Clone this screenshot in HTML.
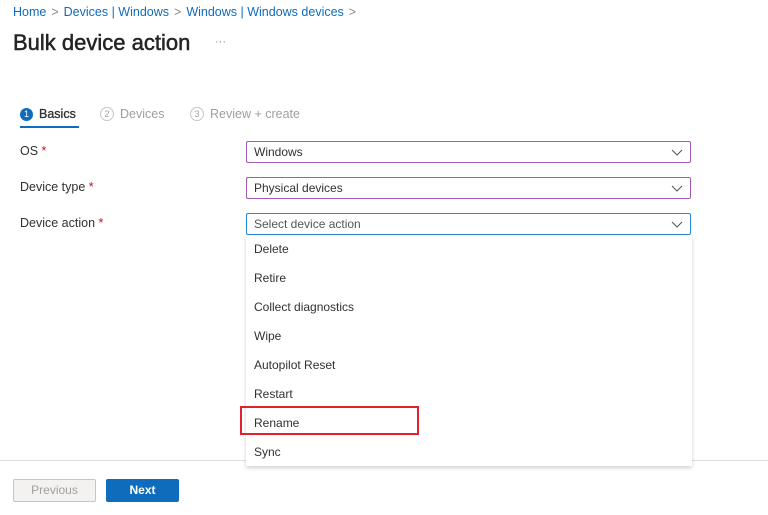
<!DOCTYPE html><html><head><style>
body{margin:0;width:768px;height:515px;background:#fff;font-family:"Liberation Sans",sans-serif;position:relative;overflow:hidden;color:#323130}
.a{position:absolute;white-space:nowrap}
.bc{font-size:12.5px;color:#0f6cbd;top:5px;left:13px}
.bc span{color:#888;margin:0 5px}
.sel{position:absolute;left:246px;width:436px;height:20px;border:1px solid #a35ab5;border-radius:2px;font-size:12px;line-height:20px;padding-left:7px;box-sizing:content-box}
.chev{position:absolute;right:7px;top:4px}
.lbl{font-size:12.5px;left:20px}
.lbl b{color:#c50f1f;font-weight:normal}
.it{position:absolute;left:254px;font-size:12px}
.circ{display:inline-block;width:13px;height:13px;border-radius:50%;font-size:9px;line-height:13px;text-align:center;vertical-align:1px;margin-right:6px}
</style></head><body>
<div class="a bc">Home<span>&gt;</span>Devices | Windows<span>&gt;</span>Windows | Windows devices<span>&gt;</span></div>
<div class="a" style="top:30px;left:13px;font-size:22px;color:#252423;-webkit-text-stroke:0.5px #252423">Bulk device action</div>
<div class="a" style="top:36px;left:215px;font-size:11px;color:#888">···</div>
<div class="a" style="top:107px;left:20px;font-size:12.5px;-webkit-text-stroke:0.3px #323130"><span class="circ" style="background:#0f6cbd;color:#fff;-webkit-text-stroke:0">1</span>Basics</div>
<div class="a" style="top:126px;left:20px;width:59px;height:2px;background:#0f6cbd"></div>
<div class="a" style="top:107px;left:100px;font-size:12.5px;color:#a19f9d"><span class="circ" style="border:1px solid #c8c6c4;width:12px;height:12px;line-height:12px">2</span>Devices</div>
<div class="a" style="top:107px;left:190px;font-size:12.5px;color:#a19f9d"><span class="circ" style="border:1px solid #c8c6c4;width:12px;height:12px;line-height:12px">3</span>Review + create</div>
<div class="a lbl" style="top:144px">OS <b>*</b></div>
<div class="a lbl" style="top:180px">Device type <b>*</b></div>
<div class="a lbl" style="top:216px">Device action <b>*</b></div>
<div class="sel" style="top:141px">Windows<svg class="chev" width="12" height="12"><path d="M1 4l5 5 5-5" fill="none" stroke="#555" stroke-width="1"/></svg></div>
<div class="sel" style="top:177px">Physical devices<svg class="chev" width="12" height="12"><path d="M1 4l5 5 5-5" fill="none" stroke="#555" stroke-width="1"/></svg></div>
<div class="sel" style="top:213px;border-color:#2b88d8;color:#555">Select device action<svg class="chev" width="12" height="12"><path d="M1 4l5 5 5-5" fill="none" stroke="#555" stroke-width="1"/></svg></div>
<div class="a" style="left:0;top:460px;width:768px;height:1px;background:#e1dfdd"></div>
<div class="a" style="left:246px;top:235px;width:446px;height:231px;background:#fff;box-shadow:0 2px 4px rgba(0,0,0,.18)"></div>
<div class="it" style="top:242px">Delete</div>
<div class="it" style="top:271px">Retire</div>
<div class="it" style="top:300px">Collect diagnostics</div>
<div class="it" style="top:329px">Wipe</div>
<div class="it" style="top:358px">Autopilot Reset</div>
<div class="it" style="top:387px">Restart</div>
<div class="it" style="top:416px">Rename</div>
<div class="it" style="top:445px">Sync</div>
<div class="a" style="left:240px;top:406px;width:175px;height:25px;border:2px solid #e3202f"></div>
<div class="a" style="left:13px;top:479px;width:81px;height:21px;border:1px solid #c8c6c4;background:#f3f2f1;border-radius:2px;color:#a19f9d;font-size:12px;text-align:center;line-height:21px">Previous</div>
<div class="a" style="left:106px;top:479px;width:73px;height:23px;background:#0f6cbd;border-radius:2px;color:#fff;font-size:12px;font-weight:bold;text-align:center;line-height:23px">Next</div>
</body></html>
